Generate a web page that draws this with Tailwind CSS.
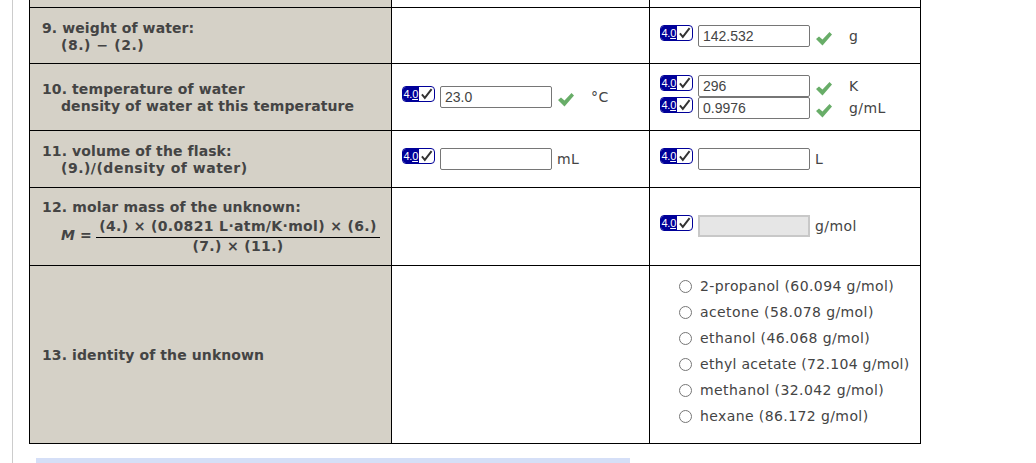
<!DOCTYPE html>
<html lang="en">
<head>
    <meta charset="UTF-8">
    <title>Molar mass of a volatile liquid</title>
    <script src="https://cdn.jsdelivr.net/npm/@tailwindcss/browser@4"></script>
</head>
<body class="bg-white font-['DejaVu_Sans',sans-serif] text-[#444] overflow-hidden">
    <div class="ml-3 w-[1024px] h-[463px] border-l border-[#ccc] pl-4 overflow-hidden">
        <table class="table-fixed border-collapse w-[891px] text-[14px] tracking-[0.4px]">
            <colgroup>
                <col class="w-[362px]">
                <col class="w-[258px]">
                <col class="w-[271px]">
            </colgroup>
            <tbody>
                <tr class="h-[7px]">
                    <td class="border border-black border-t-0 bg-[#d5d1c7]"></td>
                    <td class="border border-black border-t-0"></td>
                    <td class="border border-black border-t-0"></td>
                </tr>
                <tr class="h-[56px]">
                    <td class="border border-black bg-[#d5d1c7] pl-3 pt-1 font-bold leading-[17px] tracking-[0.1px] align-middle">
                        <div>9. weight of water:</div>
                        <div class="pl-[19px] tracking-[0.55px]">(8.) &minus; (2.)</div>
                    </td>
                    <td class="border border-black"></td>
                    <td class="border border-black pl-2.5 pt-[2px] align-middle">
                        <div class="flex items-start h-[22px]">
                            <div class="flex w-[33px] h-4 mr-[5px] rounded-[4px] border border-[#000099] bg-white overflow-hidden">
                                <span class="w-4 bg-[#000099] text-white font-['Liberation_Sans',sans-serif] text-[11px] leading-[14px] tracking-[-0.3px] text-center">4.<span class="underline">0</span></span>
                                <svg class="w-4 h-[14px]" viewBox="0 0 16 14"><path d="M3 7.5l3 3.5 7-9" fill="none" stroke="#333" stroke-width="2"/></svg>
                            </div>
                            <input type="text" value="142.532" class="w-28 h-[22px] px-1 border border-[#767676] rounded-[2px] font-['Liberation_Sans',sans-serif] tracking-normal text-[14px] text-[#444]">
                            <svg class="w-4 h-[15px] ml-1.5 mt-1.5 shrink-0" viewBox="0 0 16 15"><path d="M0 8l3-2.5 3.5 3L13.5 1 16 3.5 6.5 14.5z" fill="#68ad68"/></svg>
                            <span class="ml-[17px] mt-[3px] leading-4">g</span>
                        </div>
                    </td>
                </tr>
                <tr class="h-[67px]">
                    <td class="border border-black bg-[#d5d1c7] pl-3 pt-[2px] font-bold leading-[17px] tracking-[0.1px] align-middle">
                        <div>10. temperature of water</div>
                        <div class="pl-[19px]">density of water at this temperature</div>
                    </td>
                    <td class="border border-black pl-2.5 align-middle">
                        <div class="flex items-start h-[22px]">
                            <div class="flex w-[33px] h-4 mr-[5px] rounded-[4px] border border-[#000099] bg-white overflow-hidden">
                                <span class="w-4 bg-[#000099] text-white font-['Liberation_Sans',sans-serif] text-[11px] leading-[14px] tracking-[-0.3px] text-center">4.<span class="underline">0</span></span>
                                <svg class="w-4 h-[14px]" viewBox="0 0 16 14"><path d="M3 7.5l3 3.5 7-9" fill="none" stroke="#333" stroke-width="2"/></svg>
                            </div>
                            <input type="text" value="23.0" class="w-28 h-[22px] px-1 border border-[#767676] rounded-[2px] font-['Liberation_Sans',sans-serif] tracking-normal text-[14px] text-[#444]">
                            <svg class="w-4 h-[15px] ml-1.5 mt-1.5 shrink-0" viewBox="0 0 16 15"><path d="M0 8l3-2.5 3.5 3L13.5 1 16 3.5 6.5 14.5z" fill="#68ad68"/></svg>
                            <span class="ml-[17px] mt-[3px] leading-4">&deg;C</span>
                        </div>
                    </td>
                    <td class="border border-black pl-2.5 align-middle">
                        <div class="flex items-start h-[22px]">
                            <div class="flex w-[33px] h-4 mr-[5px] rounded-[4px] border border-[#000099] bg-white overflow-hidden">
                                <span class="w-4 bg-[#000099] text-white font-['Liberation_Sans',sans-serif] text-[11px] leading-[14px] tracking-[-0.3px] text-center">4.<span class="underline">0</span></span>
                                <svg class="w-4 h-[14px]" viewBox="0 0 16 14"><path d="M3 7.5l3 3.5 7-9" fill="none" stroke="#333" stroke-width="2"/></svg>
                            </div>
                            <input type="text" value="296" class="w-28 h-[22px] px-1 border border-[#767676] rounded-[2px] font-['Liberation_Sans',sans-serif] tracking-normal text-[14px] text-[#444]">
                            <svg class="w-4 h-[15px] ml-1.5 mt-1.5 shrink-0" viewBox="0 0 16 15"><path d="M0 8l3-2.5 3.5 3L13.5 1 16 3.5 6.5 14.5z" fill="#68ad68"/></svg>
                            <span class="ml-[17px] mt-[3px] leading-4">K</span>
                        </div>
                        <div class="flex items-start h-[22px]">
                            <div class="flex w-[33px] h-4 mr-[5px] rounded-[4px] border border-[#000099] bg-white overflow-hidden">
                                <span class="w-4 bg-[#000099] text-white font-['Liberation_Sans',sans-serif] text-[11px] leading-[14px] tracking-[-0.3px] text-center">4.<span class="underline">0</span></span>
                                <svg class="w-4 h-[14px]" viewBox="0 0 16 14"><path d="M3 7.5l3 3.5 7-9" fill="none" stroke="#333" stroke-width="2"/></svg>
                            </div>
                            <input type="text" value="0.9976" class="w-28 h-[22px] px-1 border border-[#767676] rounded-[2px] font-['Liberation_Sans',sans-serif] tracking-normal text-[14px] text-[#444]">
                            <svg class="w-4 h-[15px] ml-1.5 mt-1.5 shrink-0" viewBox="0 0 16 15"><path d="M0 8l3-2.5 3.5 3L13.5 1 16 3.5 6.5 14.5z" fill="#68ad68"/></svg>
                            <span class="ml-[17px] mt-[3px] leading-4">g/mL</span>
                        </div>
                    </td>
                </tr>
                <tr class="h-[57px]">
                    <td class="border border-black bg-[#d5d1c7] pl-3 pt-[2px] font-bold leading-[17px] tracking-[0.1px] align-middle">
                        <div>11. volume of the flask:</div>
                        <div class="pl-[19px] tracking-[0.5px]">(9.)/(density of water)</div>
                    </td>
                    <td class="border border-black pl-2.5 align-middle">
                        <div class="flex items-start h-[22px]">
                            <div class="flex w-[33px] h-4 mr-[5px] rounded-[4px] border border-[#000099] bg-white overflow-hidden">
                                <span class="w-4 bg-[#000099] text-white font-['Liberation_Sans',sans-serif] text-[11px] leading-[14px] tracking-[-0.3px] text-center">4.<span class="underline">0</span></span>
                                <svg class="w-4 h-[14px]" viewBox="0 0 16 14"><path d="M3 7.5l3 3.5 7-9" fill="none" stroke="#333" stroke-width="2"/></svg>
                            </div>
                            <input type="text" class="w-28 h-[22px] px-1 border border-[#767676] rounded-[2px] font-['Liberation_Sans',sans-serif] tracking-normal text-[14px] text-[#444]">
                            <span class="ml-[5px] mt-[3px] leading-4">mL</span>
                        </div>
                    </td>
                    <td class="border border-black pl-2.5 align-middle">
                        <div class="flex items-start h-[22px]">
                            <div class="flex w-[33px] h-4 mr-[5px] rounded-[4px] border border-[#000099] bg-white overflow-hidden">
                                <span class="w-4 bg-[#000099] text-white font-['Liberation_Sans',sans-serif] text-[11px] leading-[14px] tracking-[-0.3px] text-center">4.<span class="underline">0</span></span>
                                <svg class="w-4 h-[14px]" viewBox="0 0 16 14"><path d="M3 7.5l3 3.5 7-9" fill="none" stroke="#333" stroke-width="2"/></svg>
                            </div>
                            <input type="text" class="w-28 h-[22px] px-1 border border-[#767676] rounded-[2px] font-['Liberation_Sans',sans-serif] tracking-normal text-[14px] text-[#444]">
                            <span class="ml-[5px] mt-[3px] leading-4">L</span>
                        </div>
                    </td>
                </tr>
                <tr class="h-[78px]">
                    <td class="border border-black bg-[#d5d1c7] pl-3 pr-[11px] pt-[2px] font-bold leading-[17px] tracking-[0.15px] align-middle">
                        <div>12. molar mass of the unknown:</div>
                        <div class="flex items-center pl-[19px]">
                            <span class="italic">M =</span>
                            <div class="w-[284px] ml-auto text-center tracking-[0.35px]">
                                <div class="border-b border-black pb-[2px] pt-[2px]">(4.) &times; (0.0821 L&middot;atm/K&middot;mol) &times; (6.)</div>
                                <div>(7.) &times; (11.)</div>
                            </div>
                        </div>
                    </td>
                    <td class="border border-black"></td>
                    <td class="border border-black pl-2.5 align-middle">
                        <div class="flex items-start h-[22px]">
                            <div class="flex w-[33px] h-4 mr-[5px] rounded-[4px] border border-[#000099] bg-white overflow-hidden">
                                <span class="w-4 bg-[#000099] text-white font-['Liberation_Sans',sans-serif] text-[11px] leading-[14px] tracking-[-0.3px] text-center">4.<span class="underline">0</span></span>
                                <svg class="w-4 h-[14px]" viewBox="0 0 16 14"><path d="M3 7.5l3 3.5 7-9" fill="none" stroke="#333" stroke-width="2"/></svg>
                            </div>
                            <input type="text" disabled class="w-28 h-[22px] px-1 border-2 border-[#c8c8c8] bg-[#e6e6e6]">
                            <span class="ml-[5px] mt-[3px] leading-4">g/mol</span>
                        </div>
                    </td>
                </tr>
                <tr class="h-[178px]">
                    <td class="border border-black bg-[#d5d1c7] pl-3 pt-[2px] font-bold leading-[17px] tracking-[0.1px] align-middle">13. identity of the unknown</td>
                    <td class="border border-black"></td>
                    <td class="border border-black pl-[29px] pb-[6px] align-middle">
                        <label class="flex items-center h-[26px]"><input type="radio" name="unknown" class="w-[13px] h-[13px] mr-2">2-propanol (60.094 g/mol)</label>
                        <label class="flex items-center h-[26px]"><input type="radio" name="unknown" class="w-[13px] h-[13px] mr-2">acetone (58.078 g/mol)</label>
                        <label class="flex items-center h-[26px]"><input type="radio" name="unknown" class="w-[13px] h-[13px] mr-2">ethanol (46.068 g/mol)</label>
                        <label class="flex items-center h-[26px] tracking-[0.3px]"><input type="radio" name="unknown" class="w-[13px] h-[13px] mr-2">ethyl acetate (72.104 g/mol)</label>
                        <label class="flex items-center h-[26px]"><input type="radio" name="unknown" class="w-[13px] h-[13px] mr-2">methanol (32.042 g/mol)</label>
                        <label class="flex items-center h-[26px]"><input type="radio" name="unknown" class="w-[13px] h-[13px] mr-2">hexane (86.172 g/mol)</label>
                    </td>
                </tr>
            </tbody>
        </table>
        <div class="mt-[14px] ml-[7px] w-[594px] h-6 bg-[#d5dff7]"></div>
    </div>
</body>
</html>
